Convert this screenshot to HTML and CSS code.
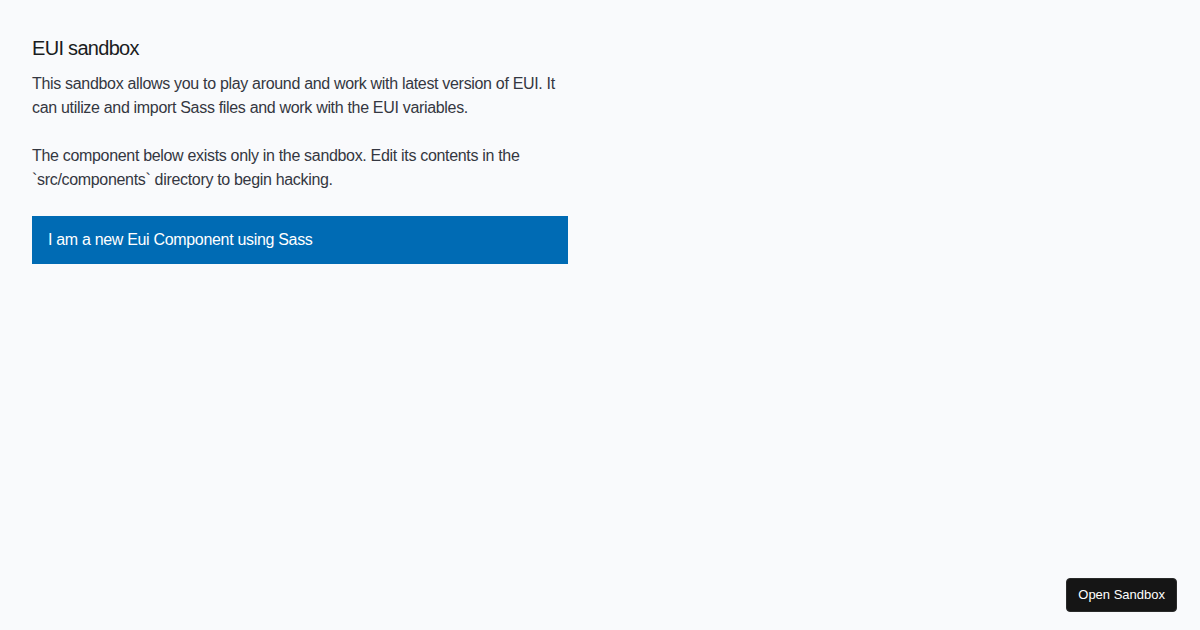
FILE: index.html
```html
<!DOCTYPE html>
<html lang="en">
<head>
    <meta charset="UTF-8">
    <meta name="viewport" content="width=device-width, initial-scale=1.0">
    <title>EUI sandbox</title>
    <link rel="stylesheet" href="styles.css">
</head>
<body>
    <div class="page">
        <div class="sandbox-content">
            <h2 class="sandbox-title">EUI sandbox</h2>
            <p>This sandbox allows you to play around and work with latest version of EUI. It can utilize and import Sass files and work with the EUI variables.</p>
            <p>The component below exists only in the sandbox. Edit its contents in the `src/components` directory to begin hacking.</p>
            <div class="my-component">I am a new Eui Component using Sass</div>
        </div>
    </div>

    <a class="open-sandbox" href="#">Open Sandbox</a>
</body>
</html>
```

FILE: styles.css
```css
* {
    margin: 0;
    padding: 0;
    box-sizing: border-box;
}

body {
    font-family: "Liberation Sans", Arial, sans-serif;
    background: #f9fafc;
    color: #343741;
    min-height: 100vh;
}

.page {
    padding: 32px;
}

.sandbox-content {
    width: 536px;
    letter-spacing: -0.02em;
}

.sandbox-title {
    color: #1a1c21;
    font-size: 20px;
    font-weight: 400;
    line-height: 32px;
    letter-spacing: -0.035em;
    margin-bottom: 8px;
}

.sandbox-content p {
    font-size: 16px;
    line-height: 24px;
    margin-bottom: 24px;
}

.my-component {
    background: #006bb4;
    color: #fff;
    font-size: 16px;
    line-height: 24px;
    padding: 12px 16px;
}

.open-sandbox {
    position: fixed;
    right: 23px;
    bottom: 18px;
    background: #151515;
    color: #fff;
    font-size: 13px;
    line-height: 16px;
    text-decoration: none;
    padding: 8px 11px;
    border-radius: 4px;
    border: 1px solid #2a2a2a;
}
```
